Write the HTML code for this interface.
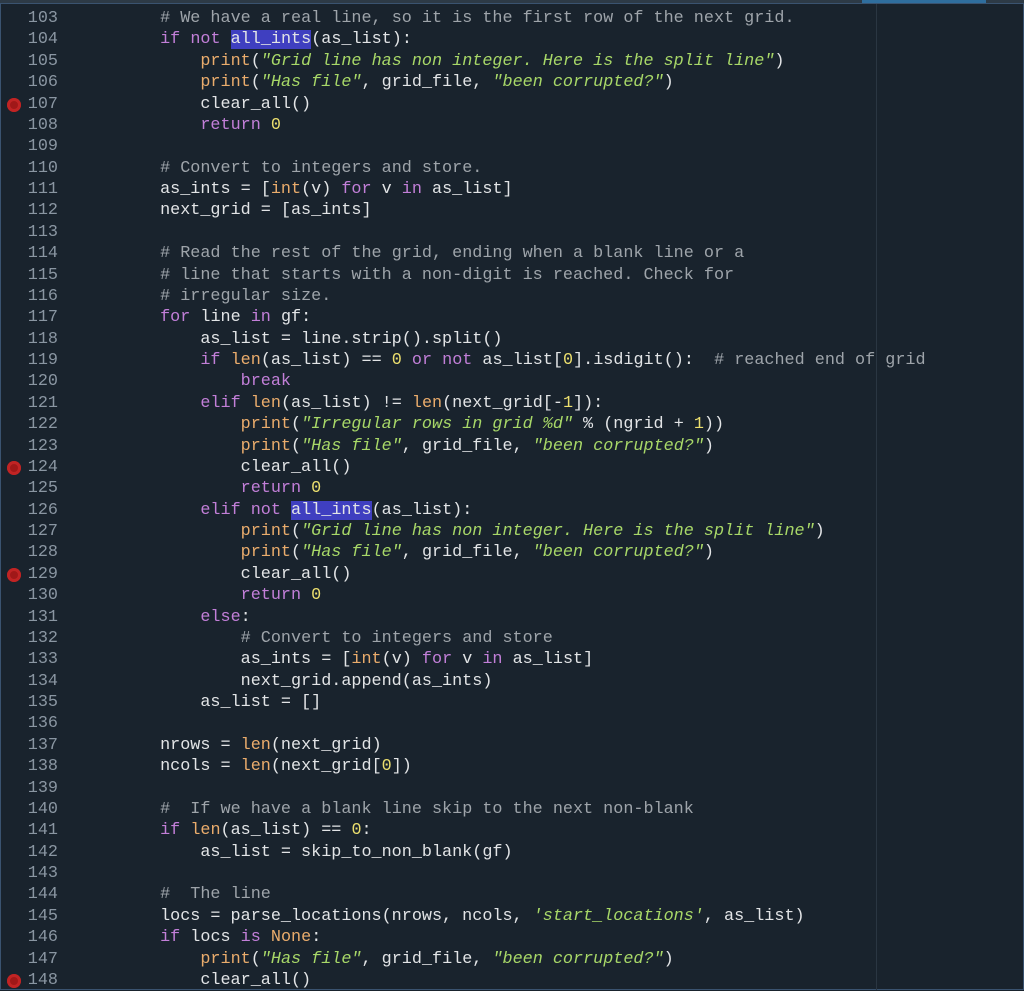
<!DOCTYPE html>
<html><head><style>
body{margin:0;width:1024px;height:990px;background:#19232d;overflow:hidden;position:relative;font-family:"Liberation Mono",monospace;}
.top{position:absolute;left:0;top:0;width:1024px;height:3px;background:#2d3a46;}
.topb{position:absolute;left:862px;top:0;width:124px;height:3px;background:#2f6e9e;}
.frame{position:absolute;left:0;top:3px;width:1022px;height:985px;border:1px solid #3a5370;}
.vline{position:absolute;left:876px;top:4px;width:1px;height:986px;background:#2a3642;}
.gut{position:absolute;left:0;top:8px;width:58px;text-align:right;color:#8a96a2;font-size:16.8px;line-height:21.38px;white-space:pre;}
.code{position:absolute;left:79.5px;top:8px;color:#e2e4e6;font-size:16.8px;line-height:21.38px;white-space:pre;}
.bp{position:absolute;left:7px;width:14px;height:14px;border-radius:50%;background:#a01818;box-shadow:inset 0 0 0 3px #c02424;}
.c{color:#9ea4aa}.k{color:#c27fd8}.b{color:#eaac6c}.s{color:#a8d868;font-style:italic}.n{color:#ecdf6e}
.h{background:#3f3fc0}
</style></head><body>
<div class="top"></div><div class="topb"></div><div class="frame"></div><div class="vline"></div>
<div class="bp" style="top:98px"></div><div class="bp" style="top:461px"></div><div class="bp" style="top:568px"></div><div class="bp" style="top:974px"></div>
<div class="gut">103
104
105
106
107
108
109
110
111
112
113
114
115
116
117
118
119
120
121
122
123
124
125
126
127
128
129
130
131
132
133
134
135
136
137
138
139
140
141
142
143
144
145
146
147
148</div>
<div class="code">        <span class="c"># We have a real line, so it is the first row of the next grid.</span>
        <span class="k">if</span> <span class="k">not</span> <span class="h">all_ints</span>(as_list):
            <span class="b">print</span>(<span class="s">"Grid line has non integer. Here is the split line"</span>)
            <span class="b">print</span>(<span class="s">"Has file"</span>, grid_file, <span class="s">"been corrupted?"</span>)
            clear_all()
            <span class="k">return</span> <span class="n">0</span>

        <span class="c"># Convert to integers and store.</span>
        as_ints = [<span class="b">int</span>(v) <span class="k">for</span> v <span class="k">in</span> as_list]
        next_grid = [as_ints]

        <span class="c"># Read the rest of the grid, ending when a blank line or a</span>
        <span class="c"># line that starts with a non-digit is reached. Check for</span>
        <span class="c"># irregular size.</span>
        <span class="k">for</span> line <span class="k">in</span> gf:
            as_list = line.strip().split()
            <span class="k">if</span> <span class="b">len</span>(as_list) == <span class="n">0</span> <span class="k">or</span> <span class="k">not</span> as_list[<span class="n">0</span>].isdigit():  <span class="c"># reached end of grid</span>
                <span class="k">break</span>
            <span class="k">elif</span> <span class="b">len</span>(as_list) != <span class="b">len</span>(next_grid[-<span class="n">1</span>]):
                <span class="b">print</span>(<span class="s">"Irregular rows in grid %d"</span> % (ngrid + <span class="n">1</span>))
                <span class="b">print</span>(<span class="s">"Has file"</span>, grid_file, <span class="s">"been corrupted?"</span>)
                clear_all()
                <span class="k">return</span> <span class="n">0</span>
            <span class="k">elif</span> <span class="k">not</span> <span class="h">all_ints</span>(as_list):
                <span class="b">print</span>(<span class="s">"Grid line has non integer. Here is the split line"</span>)
                <span class="b">print</span>(<span class="s">"Has file"</span>, grid_file, <span class="s">"been corrupted?"</span>)
                clear_all()
                <span class="k">return</span> <span class="n">0</span>
            <span class="k">else</span>:
                <span class="c"># Convert to integers and store</span>
                as_ints = [<span class="b">int</span>(v) <span class="k">for</span> v <span class="k">in</span> as_list]
                next_grid.append(as_ints)
            as_list = []

        nrows = <span class="b">len</span>(next_grid)
        ncols = <span class="b">len</span>(next_grid[<span class="n">0</span>])

        <span class="c">#  If we have a blank line skip to the next non-blank</span>
        <span class="k">if</span> <span class="b">len</span>(as_list) == <span class="n">0</span>:
            as_list = skip_to_non_blank(gf)

        <span class="c">#  The line</span>
        locs = parse_locations(nrows, ncols, <span class="s">'start_locations'</span>, as_list)
        <span class="k">if</span> locs <span class="k">is</span> <span class="b">None</span>:
            <span class="b">print</span>(<span class="s">"Has file"</span>, grid_file, <span class="s">"been corrupted?"</span>)
            clear_all()</div>
</body></html>
